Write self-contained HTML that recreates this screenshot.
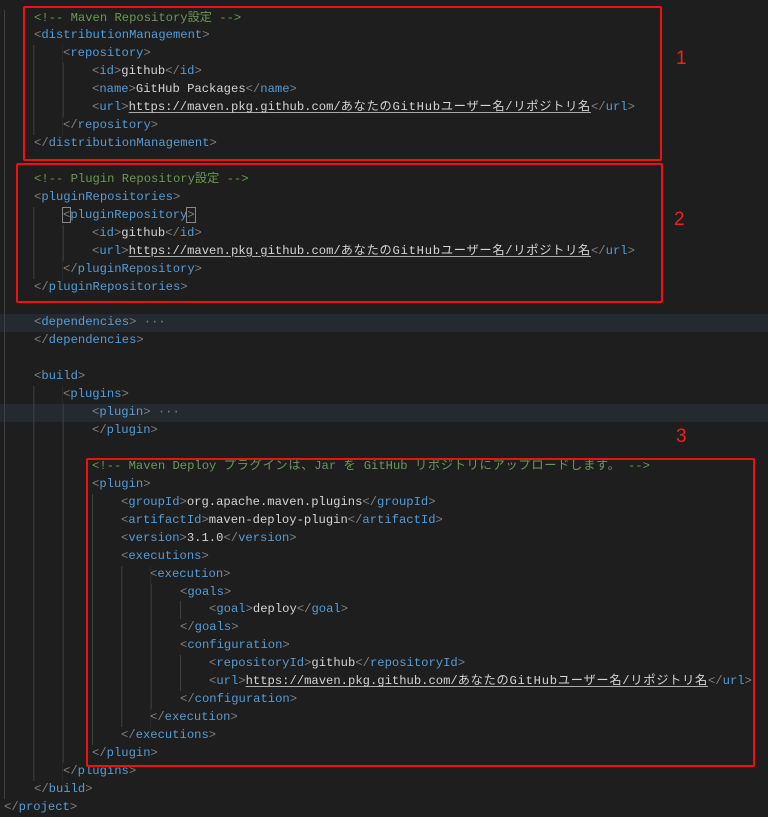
<!DOCTYPE html>
<html><head><meta charset="utf-8"><style>
body{margin:0;background:#1e1e1e;width:768px;height:817px;overflow:hidden;position:relative;font-family:"Liberation Mono","Noto Sans CJK JP",monospace;font-size:12.2px;}
.code{position:absolute;left:0;top:9.5px;width:768px}
.l{height:17.95px;line-height:17.95px;position:relative;white-space:pre;color:#d4d4d4}
.g{position:absolute;left:4px;top:0;height:100%;background-image:linear-gradient(to right,#404040 1px,transparent 1px);background-size:29.33px 100%;background-repeat:repeat-x}
.t{position:absolute;top:0}
.hl{background:#252a31}
.b{color:#808080}.n{color:#569cd6}.c{color:#6a9955}
u{text-decoration:underline;text-decoration-color:#aaa;text-underline-offset:2px}
.j{letter-spacing:0.75px}
.box{position:absolute;border:2px solid #f01010;border-radius:2px}
.num{position:absolute;color:#f02020;font-family:"Liberation Sans",sans-serif;font-size:19px}
</style></head><body>
<div class="code">
<div class="l"><div class="g" style="width:29px"></div><span class="t c" style="left:34px">&lt;!-- Maven Repository設定 --&gt;</span></div>
<div class="l"><div class="g" style="width:29px"></div><span class="t" style="left:34px"><span class="b">&lt;</span><span class="n">distributionManagement</span><span class="b">&gt;</span></span></div>
<div class="l"><div class="g" style="width:59px"></div><span class="t" style="left:63px"><span class="b">&lt;</span><span class="n">repository</span><span class="b">&gt;</span></span></div>
<div class="l"><div class="g" style="width:88px"></div><span class="t" style="left:92px"><span class="b">&lt;</span><span class="n">id</span><span class="b">&gt;</span>github<span class="b">&lt;/</span><span class="n">id</span><span class="b">&gt;</span></span></div>
<div class="l"><div class="g" style="width:88px"></div><span class="t" style="left:92px"><span class="b">&lt;</span><span class="n">name</span><span class="b">&gt;</span>GitHub Packages<span class="b">&lt;/</span><span class="n">name</span><span class="b">&gt;</span></span></div>
<div class="l"><div class="g" style="width:88px"></div><span class="t" style="left:92px"><span class="b">&lt;</span><span class="n">url</span><span class="b">&gt;</span><u>https://maven.pkg.github.com/<span class="j">あなたのGitHubユーザー名/リポジトリ名</span></u><span class="b">&lt;/</span><span class="n">url</span><span class="b">&gt;</span></span></div>
<div class="l"><div class="g" style="width:59px"></div><span class="t" style="left:63px"><span class="b">&lt;/</span><span class="n">repository</span><span class="b">&gt;</span></span></div>
<div class="l"><div class="g" style="width:29px"></div><span class="t" style="left:34px"><span class="b">&lt;/</span><span class="n">distributionManagement</span><span class="b">&gt;</span></span></div>
<div class="l"><div class="g" style="width:29px"></div></div>
<div class="l"><div class="g" style="width:29px"></div><span class="t c" style="left:34px">&lt;!-- Plugin Repository設定 --&gt;</span></div>
<div class="l"><div class="g" style="width:29px"></div><span class="t" style="left:34px"><span class="b">&lt;</span><span class="n">pluginRepositories</span><span class="b">&gt;</span></span></div>
<div class="l"><div class="g" style="width:59px"></div><span class="t" style="left:63px"><span class="b" style="outline:1px solid #888">&lt;</span><span class="n">pluginRepository</span><span class="b" style="outline:1px solid #888">&gt;</span></span></div>
<div class="l"><div class="g" style="width:88px"></div><span class="t" style="left:92px"><span class="b">&lt;</span><span class="n">id</span><span class="b">&gt;</span>github<span class="b">&lt;/</span><span class="n">id</span><span class="b">&gt;</span></span></div>
<div class="l"><div class="g" style="width:88px"></div><span class="t" style="left:92px"><span class="b">&lt;</span><span class="n">url</span><span class="b">&gt;</span><u>https://maven.pkg.github.com/<span class="j">あなたのGitHubユーザー名/リポジトリ名</span></u><span class="b">&lt;/</span><span class="n">url</span><span class="b">&gt;</span></span></div>
<div class="l"><div class="g" style="width:59px"></div><span class="t" style="left:63px"><span class="b">&lt;/</span><span class="n">pluginRepository</span><span class="b">&gt;</span></span></div>
<div class="l"><div class="g" style="width:29px"></div><span class="t" style="left:34px"><span class="b">&lt;/</span><span class="n">pluginRepositories</span><span class="b">&gt;</span></span></div>
<div class="l"><div class="g" style="width:29px"></div></div>
<div class="l hl"><div class="g" style="width:29px"></div><span class="t" style="left:34px"><span class="b">&lt;</span><span class="n">dependencies</span><span class="b">&gt;</span><span class="b"> ···</span></span></div>
<div class="l"><div class="g" style="width:29px"></div><span class="t" style="left:34px"><span class="b">&lt;/</span><span class="n">dependencies</span><span class="b">&gt;</span></span></div>
<div class="l"><div class="g" style="width:29px"></div></div>
<div class="l"><div class="g" style="width:29px"></div><span class="t" style="left:34px"><span class="b">&lt;</span><span class="n">build</span><span class="b">&gt;</span></span></div>
<div class="l"><div class="g" style="width:59px"></div><span class="t" style="left:63px"><span class="b">&lt;</span><span class="n">plugins</span><span class="b">&gt;</span></span></div>
<div class="l hl"><div class="g" style="width:88px"></div><span class="t" style="left:92px"><span class="b">&lt;</span><span class="n">plugin</span><span class="b">&gt;</span><span class="b"> ···</span></span></div>
<div class="l"><div class="g" style="width:88px"></div><span class="t" style="left:92px"><span class="b">&lt;/</span><span class="n">plugin</span><span class="b">&gt;</span></span></div>
<div class="l"><div class="g" style="width:88px"></div></div>
<div class="l"><div class="g" style="width:88px"></div><span class="t c" style="left:92px">&lt;!-- Maven Deploy <span class="j">プラグインは、</span>Jar <span class="j">を</span> GitHub <span class="j">リポジトリにアップロードします。</span> --&gt;</span></div>
<div class="l"><div class="g" style="width:88px"></div><span class="t" style="left:92px"><span class="b">&lt;</span><span class="n">plugin</span><span class="b">&gt;</span></span></div>
<div class="l"><div class="g" style="width:117px"></div><span class="t" style="left:121px"><span class="b">&lt;</span><span class="n">groupId</span><span class="b">&gt;</span>org.apache.maven.plugins<span class="b">&lt;/</span><span class="n">groupId</span><span class="b">&gt;</span></span></div>
<div class="l"><div class="g" style="width:117px"></div><span class="t" style="left:121px"><span class="b">&lt;</span><span class="n">artifactId</span><span class="b">&gt;</span>maven-deploy-plugin<span class="b">&lt;/</span><span class="n">artifactId</span><span class="b">&gt;</span></span></div>
<div class="l"><div class="g" style="width:117px"></div><span class="t" style="left:121px"><span class="b">&lt;</span><span class="n">version</span><span class="b">&gt;</span>3.1.0<span class="b">&lt;/</span><span class="n">version</span><span class="b">&gt;</span></span></div>
<div class="l"><div class="g" style="width:117px"></div><span class="t" style="left:121px"><span class="b">&lt;</span><span class="n">executions</span><span class="b">&gt;</span></span></div>
<div class="l"><div class="g" style="width:147px"></div><span class="t" style="left:150px"><span class="b">&lt;</span><span class="n">execution</span><span class="b">&gt;</span></span></div>
<div class="l"><div class="g" style="width:176px"></div><span class="t" style="left:180px"><span class="b">&lt;</span><span class="n">goals</span><span class="b">&gt;</span></span></div>
<div class="l"><div class="g" style="width:205px"></div><span class="t" style="left:209px"><span class="b">&lt;</span><span class="n">goal</span><span class="b">&gt;</span>deploy<span class="b">&lt;/</span><span class="n">goal</span><span class="b">&gt;</span></span></div>
<div class="l"><div class="g" style="width:176px"></div><span class="t" style="left:180px"><span class="b">&lt;/</span><span class="n">goals</span><span class="b">&gt;</span></span></div>
<div class="l"><div class="g" style="width:176px"></div><span class="t" style="left:180px"><span class="b">&lt;</span><span class="n">configuration</span><span class="b">&gt;</span></span></div>
<div class="l"><div class="g" style="width:205px"></div><span class="t" style="left:209px"><span class="b">&lt;</span><span class="n">repositoryId</span><span class="b">&gt;</span>github<span class="b">&lt;/</span><span class="n">repositoryId</span><span class="b">&gt;</span></span></div>
<div class="l"><div class="g" style="width:205px"></div><span class="t" style="left:209px"><span class="b">&lt;</span><span class="n">url</span><span class="b">&gt;</span><u>https://maven.pkg.github.com/<span class="j">あなたのGitHubユーザー名/リポジトリ名</span></u><span class="b">&lt;/</span><span class="n">url</span><span class="b">&gt;</span></span></div>
<div class="l"><div class="g" style="width:176px"></div><span class="t" style="left:180px"><span class="b">&lt;/</span><span class="n">configuration</span><span class="b">&gt;</span></span></div>
<div class="l"><div class="g" style="width:147px"></div><span class="t" style="left:150px"><span class="b">&lt;/</span><span class="n">execution</span><span class="b">&gt;</span></span></div>
<div class="l"><div class="g" style="width:117px"></div><span class="t" style="left:121px"><span class="b">&lt;/</span><span class="n">executions</span><span class="b">&gt;</span></span></div>
<div class="l"><div class="g" style="width:88px"></div><span class="t" style="left:92px"><span class="b">&lt;/</span><span class="n">plugin</span><span class="b">&gt;</span></span></div>
<div class="l"><div class="g" style="width:59px"></div><span class="t" style="left:63px"><span class="b">&lt;/</span><span class="n">plugins</span><span class="b">&gt;</span></span></div>
<div class="l"><div class="g" style="width:29px"></div><span class="t" style="left:34px"><span class="b">&lt;/</span><span class="n">build</span><span class="b">&gt;</span></span></div>
<div class="l"><span class="t" style="left:4px"><span class="b">&lt;/</span><span class="n">project</span><span class="b">&gt;</span></span></div>
</div>
<div class="box" style="left:23px;top:6px;width:635px;height:151px"></div>
<div class="box" style="left:16px;top:163px;width:643px;height:136px"></div>
<div class="box" style="left:86px;top:458px;width:665px;height:305px"></div>
<div class="num" style="left:676px;top:48px">1</div>
<div class="num" style="left:674px;top:209px">2</div>
<div class="num" style="left:676px;top:426px">3</div>
</body></html>
